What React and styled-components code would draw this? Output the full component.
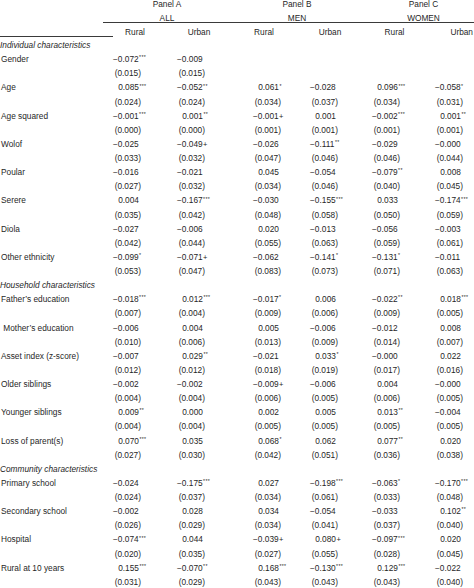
import React from 'react'
import styled, { createGlobalStyle } from "styled-components";

const GlobalStyle = createGlobalStyle`
  html, body {
    margin: 0;
    padding: 0;
    background: #ffffff;
    overflow: hidden;
  }
  body {
    font-family: "Liberation Sans", Arial, sans-serif;
    color: #1f1f1f;
  }
`;

// label column + 6 data columns (Rural/Urban for each panel)
const COLUMNS = "103px 64px 64px 66px 66px 63px 48px";
// where the minus sign of a value starts, measured from its column edge
const INDENTS = [10, 10, 22, 13, 9, 9];

const Page = styled.div`
  width: 474px;
  margin-top: -3px;
  font-size: 8.3px;
`;

const Head = styled.div`
  display: grid;
  grid-template-columns: ${COLUMNS};
`;

const PanelCell = styled.div`
  grid-column: ${p => p.$col} / span 2;
  height: 14px;
  line-height: 14px;
  text-align: center;
  padding-left: ${p => p.$pad || 0}px;
  ${p => p.$sub && `
    height: 11px;
    border-bottom: 1px solid #3a3a3a;
  `}
`;

const Corner = styled.div`
  grid-column: 1;
  ${p => p.$span && `grid-row: ${p.$span};`}
`;

const CornerRule = styled.div`
  width: 113px;
  height: 13px;
  border-bottom: 1px solid #3a3a3a;
`;

const ColHead = styled.div`
  height: 11px;
  padding-top: 2px;
  padding-right: ${p => (p.$end ? "1px" : "0")};
  line-height: 14px;
  text-align: ${p => (p.$end ? "right" : "center")};
`;

const Body = styled.div`
  display: grid;
  grid-template-columns: ${COLUMNS};
  grid-auto-rows: 14.13px;
  margin-top: 1px;
  line-height: 14.13px;
`;

const Section = styled.div`
  grid-column: 1 / -1;
  font-style: italic;
  white-space: nowrap;
`;

const Label = styled.div`
  grid-column: 1;
  padding-left: 1px;
  white-space: nowrap;
`;

const Cell = styled.div`
  padding-left: ${p => p.$indent}px;
  white-space: nowrap;
`;

const Num = styled.span`
  padding-left: ${p => (p.$kind === "pos" ? "0.62em" : p.$kind === "se" ? "0.2em" : "0")};
`;

const Stars = styled.sup`
  font-size: 0.62em;
  line-height: 0;
  vertical-align: 0.55em;
  margin-left: 0.5px;
  letter-spacing: 0.3px;
`;

const Plus = styled.span`
  font-size: 0.9em;
  margin-left: 0.5px;
`;

const Value = ({ v }) => {
  if (!v) return null;
  if (v.startsWith("(")) return <Num $kind="se">{v}</Num>;
  const m = v.match(/^(−?[0-9.]+)(\**)(\+?)$/);
  const kind = v.startsWith("−") ? "neg" : "pos";
  return (
    <Num $kind={kind}>
      {m[1]}
      {m[2] && <Stars>{m[2]}</Stars>}
      {m[3] && <Plus>+</Plus>}
    </Num>
  );
};

const rows = [
  { section: "Individual characteristics" },
  { label: "Gender", c: ["−0.072***", "−0.009", "", "", "", ""], se: ["(0.015)", "(0.015)", "", "", "", ""] },
  { label: "Age", c: ["0.085***", "−0.052**", "0.061*", "−0.028", "0.096***", "−0.058*"], se: ["(0.024)", "(0.024)", "(0.034)", "(0.037)", "(0.034)", "(0.031)"] },
  { label: "Age squared", c: ["−0.001***", "0.001**", "−0.001+", "0.001", "−0.002***", "0.001**"], se: ["(0.000)", "(0.000)", "(0.001)", "(0.001)", "(0.001)", "(0.001)"] },
  { label: "Wolof", c: ["−0.025", "−0.049+", "−0.026", "−0.111**", "−0.029", "−0.000"], se: ["(0.033)", "(0.032)", "(0.047)", "(0.046)", "(0.046)", "(0.044)"] },
  { label: "Poular", c: ["−0.016", "−0.021", "0.045", "−0.054", "−0.079**", "0.008"], se: ["(0.027)", "(0.032)", "(0.034)", "(0.046)", "(0.040)", "(0.045)"] },
  { label: "Serere", c: ["0.004", "−0.167***", "−0.030", "−0.155***", "0.033", "−0.174***"], se: ["(0.035)", "(0.042)", "(0.048)", "(0.058)", "(0.050)", "(0.059)"] },
  { label: "Diola", c: ["−0.027", "−0.006", "0.020", "−0.013", "−0.056", "−0.003"], se: ["(0.042)", "(0.044)", "(0.055)", "(0.063)", "(0.059)", "(0.061)"] },
  { label: "Other ethnicity", c: ["−0.099*", "−0.071+", "−0.062", "−0.141*", "−0.131*", "−0.011"], se: ["(0.053)", "(0.047)", "(0.083)", "(0.073)", "(0.071)", "(0.063)"] },
  { section: "Household characteristics" },
  { label: "Father’s education", c: ["−0.018***", "0.012***", "−0.017*", "0.006", "−0.022**", "0.018***"], se: ["(0.007)", "(0.004)", "(0.009)", "(0.006)", "(0.009)", "(0.005)"] },
  { label: "\u00a0Mother’s education", c: ["−0.006", "0.004", "0.005", "−0.006", "−0.012", "0.008"], se: ["(0.010)", "(0.006)", "(0.013)", "(0.009)", "(0.014)", "(0.007)"] },
  { label: "Asset index (z-score)", c: ["−0.007", "0.029**", "−0.021", "0.033*", "−0.000", "0.022"], se: ["(0.012)", "(0.012)", "(0.018)", "(0.019)", "(0.017)", "(0.016)"] },
  { label: "Older siblings", c: ["−0.002", "−0.002", "−0.009+", "−0.006", "0.004", "−0.000"], se: ["(0.004)", "(0.004)", "(0.006)", "(0.005)", "(0.006)", "(0.005)"] },
  { label: "Younger siblings", c: ["0.009**", "0.000", "0.002", "0.005", "0.013**", "−0.004"], se: ["(0.004)", "(0.004)", "(0.005)", "(0.005)", "(0.005)", "(0.005)"] },
  { label: "Loss of parent(s)", c: ["0.070***", "0.035", "0.068*", "0.062", "0.077**", "0.020"], se: ["(0.027)", "(0.030)", "(0.042)", "(0.051)", "(0.036)", "(0.038)"] },
  { section: "Community characteristics" },
  { label: "Primary school", c: ["−0.024", "−0.175***", "0.027", "−0.198***", "−0.063*", "−0.170***"], se: ["(0.024)", "(0.037)", "(0.034)", "(0.061)", "(0.033)", "(0.048)"] },
  { label: "Secondary school", c: ["−0.002", "0.028", "0.034", "−0.054", "−0.033", "0.102**"], se: ["(0.026)", "(0.029)", "(0.034)", "(0.041)", "(0.037)", "(0.040)"] },
  { label: "Hospital", c: ["−0.074***", "0.044", "−0.039+", "0.080+", "−0.097***", "0.020"], se: ["(0.020)", "(0.035)", "(0.027)", "(0.055)", "(0.028)", "(0.045)"] },
  { label: "Rural at 10 years", c: ["0.155***", "−0.070**", "0.168***", "−0.130***", "0.129***", "−0.022"], se: ["(0.031)", "(0.029)", "(0.043)", "(0.043)", "(0.043)", "(0.040)"] },
];

const panels = [
  { col: 2, name: "Panel A", group: "ALL", pad: 0 },
  { col: 4, name: "Panel B", group: "MEN", pad: 0 },
  { col: 6, name: "Panel C", group: "WOMEN", pad: 10 },
];

const App = () => {
  return (
    <>
      <GlobalStyle />
      <Page>
        <Head>
          <Corner $span="1 / span 2" />
          {panels.map(p => (
            <PanelCell key={p.name} $col={p.col} $pad={p.pad} style={{ gridRow: 1 }}>{p.name}</PanelCell>
          ))}
          {panels.map(p => (
            <PanelCell key={p.group} $col={p.col} $pad={p.pad} $sub style={{ gridRow: 2 }}>{p.group}</PanelCell>
          ))}
          <Corner>
            <CornerRule />
          </Corner>
          <ColHead>Rural</ColHead>
          <ColHead>Urban</ColHead>
          <ColHead>Rural</ColHead>
          <ColHead>Urban</ColHead>
          <ColHead>Rural</ColHead>
          <ColHead $end>Urban</ColHead>
        </Head>

        <Body>
          {rows.map((r, i) =>
            r.section ? (
              <Section key={i}>{r.section}</Section>
            ) : (
              <React.Fragment key={i}>
                <Label>{r.label}</Label>
                {r.c.map((v, j) => (
                  <Cell key={"c" + j} $indent={INDENTS[j]}><Value v={v} /></Cell>
                ))}
                <Label />
                {r.se.map((v, j) => (
                  <Cell key={"s" + j} $indent={INDENTS[j]}><Value v={v} /></Cell>
                ))}
              </React.Fragment>
            )
          )}
        </Body>
      </Page>
    </>
  )
}

export default App
